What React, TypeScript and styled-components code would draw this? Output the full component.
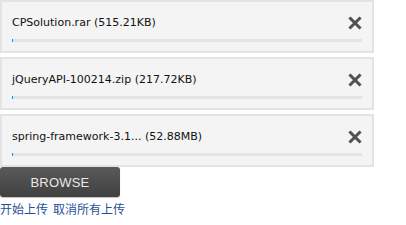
import React from "react";
import styled, { createGlobalStyle } from "styled-components";

const Global = createGlobalStyle`
  html, body { margin: 0; padding: 0; background: #ffffff; }
  body { font-family: "DejaVu Sans", Verdana, sans-serif; }
`;

const Queue = styled.div`
  display: flex;
  flex-direction: column;
  gap: 4px;
  width: 374px;
`;

const Item = styled.div`
  background: #f4f4f4;
  border: 2px solid #e3e3e3;
  padding: 12px 10px 9px;
  font: 11px "DejaVu Sans", Verdana, sans-serif;
  color: #111;
`;

const Head = styled.div`
  display: flex;
  align-items: center;
  justify-content: space-between;
  height: 17px;
  line-height: 17px;
`;

const Name = styled.span`
  white-space: nowrap;
`;

const Cancel = styled.button`
  border: 0;
  background: none;
  padding: 0;
  width: 14px;
  height: 14px;
  display: flex;
  align-items: center;
  justify-content: center;
  cursor: pointer;
`;

const Progress = styled.div`
  margin-top: 8px;
  height: 3px;
  background: #e4e4e4;
`;

const Bar = styled.div`
  height: 3px;
  background: #0099ff;
`;

const Browse = styled.button`
  display: flex;
  align-items: center;
  justify-content: center;
  width: 120px;
  height: 30px;
  border: 0;
  border-radius: 3px;
  background: linear-gradient(#5a5a5a, #404040);
  color: #e8e8e8;
  font: 13px "Liberation Sans", Arial, sans-serif;
  letter-spacing: 0.2px;
  box-shadow: 0 1px 1px rgba(0,0,0,0.25);
`;

const Links = styled.div`
  display: flex;
  gap: 5px;
  margin-top: 4px;
  font: 12px "Noto Sans CJK SC", sans-serif;
  line-height: 16px;
`;

const Link = styled.a`
  color: #1f4f9a;
  text-decoration: none;
`;

const CrossIcon = () => (
  <svg width="14" height="14" viewBox="0 0 14 14">
    <path d="M2.5 2.5 L11.5 11.5 M11.5 2.5 L2.5 11.5" stroke="#505050" strokeWidth="3" strokeLinecap="square" />
  </svg>
);

const files = [
  { name: "CPSolution.rar (515.21KB)", progress: 1 },
  { name: "jQueryAPI-100214.zip (217.72KB)", progress: 1 },
  { name: "spring-framework-3.1... (52.88MB)", progress: 1 },
];

export default function App() {
  return (
    <>
      <Global />
      <Queue>
        {files.map((f) => (
          <Item key={f.name}>
            <Head>
              <Name>{f.name}</Name>
              <Cancel aria-label="cancel">
                <CrossIcon />
              </Cancel>
            </Head>
            <Progress>
              <Bar style={{ width: `${f.progress}px` }} />
            </Progress>
          </Item>
        ))}
      </Queue>
      <Browse>BROWSE</Browse>
      <Links>
        <Link href="#">开始上传</Link>
        <Link href="#">取消所有上传</Link>
      </Links>
    </>
  );
}
